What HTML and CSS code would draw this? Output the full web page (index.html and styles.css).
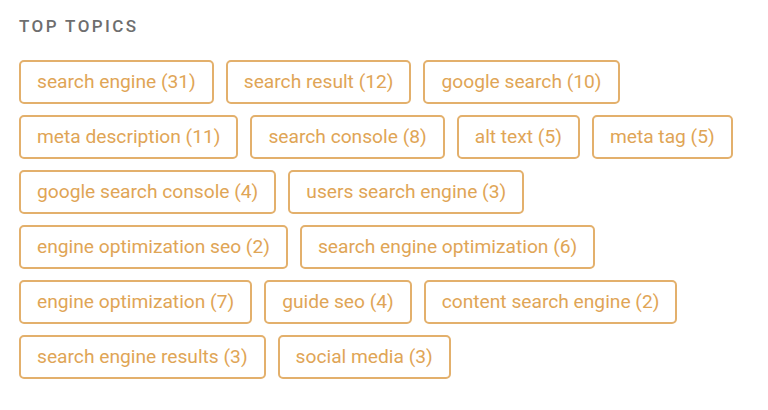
FILE: index.html
```html
<!DOCTYPE html>
<html lang="en">
<head>
  <meta charset="UTF-8">
  <meta name="viewport" content="width=device-width, initial-scale=1.0">
  <title>Top Topics</title>
  <link rel="stylesheet" href="styles.css">
</head>
<body>
  <div class="topics">
    <h3>Top Topics</h3>
    <div class="tag-list">
      <a class="tag" href="#">search engine (31)</a>
      <a class="tag" href="#">search result (12)</a>
      <a class="tag" href="#">google search (10)</a>
      <a class="tag" href="#">meta description (11)</a>
      <a class="tag" href="#">search console (8)</a>
      <a class="tag" href="#">alt text (5)</a>
      <a class="tag" href="#">meta tag (5)</a>
      <a class="tag" href="#">google search console (4)</a>
      <a class="tag" href="#">users search engine (3)</a>
      <a class="tag" href="#">engine optimization seo (2)</a>
      <a class="tag" href="#">search engine optimization (6)</a>
      <a class="tag" href="#">engine optimization (7)</a>
      <a class="tag" href="#">guide seo (4)</a>
      <a class="tag" href="#">content search engine (2)</a>
      <a class="tag" href="#">search engine results (3)</a>
      <a class="tag" href="#">social media (3)</a>
    </div>
  </div>
</body>
</html>
```

FILE: styles.css
```css
body {
  margin: 0;
  padding: 0;
  background-color: #fff;
  font-family: Roboto, "Liberation Sans", sans-serif;
}
.topics {
  padding: 16px 19px;
}
.topics h3 {
  margin: 0 0 24px 0;
  font-size: 17px;
  line-height: 20px;
  font-weight: 500;
  letter-spacing: 2.4px;
  text-transform: uppercase;
  color: #6e6e6e;
}
.tag-list {
  display: flex;
  flex-wrap: wrap;
  gap: 11px 12px;
  max-width: 730px;
}
.tag {
  display: inline-block;
  padding: 9px 16px;
  border: 2px solid #e3b06c;
  border-radius: 5px;
  font-size: 19.2px;
  line-height: 22px;
  color: #dfa556;
  text-decoration: none;
}
```
